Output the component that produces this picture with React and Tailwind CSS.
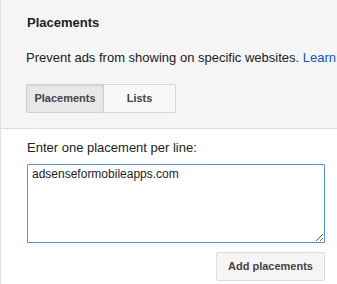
import React from "react";

const App = () => {
  return (
    <div className="w-[337px] h-[284px] overflow-hidden border-l border-[#e0e0e0] bg-white text-[13px] text-[#222]" style={{ fontFamily: '"Liberation Sans", Arial, sans-serif' }}>
      <div className="bg-[#f5f5f5] border-b border-[#dcdcdc] pl-[25px] pt-[15px] h-[129px] whitespace-nowrap">
        <h2 className="font-bold text-[13px] leading-[16px] pl-px">Placements</h2>
        <p className="mt-[19px] leading-[16px]">
          Prevent ads from showing on specific websites. <span className="text-[#15c]">Learn more</span>
        </p>
        <div className="flex mt-[18px] h-[29px] text-[11px] font-bold text-[#444]">
          <div className="w-[78px] flex items-center justify-center bg-[#e8e8e8] border border-[#d0d0d0] rounded-l-[2px] shadow-[inset_0_1px_2px_rgba(0,0,0,0.1)]">Placements</div>
          <div className="w-[72px] flex items-center justify-center bg-[#f8f8f8] border border-l-0 border-[#d6d6d6] rounded-r-[2px]">Lists</div>
        </div>
      </div>
      <div className="pl-[26px] pr-[12px] pt-[11px]">
        <p className="leading-[16px]">Enter one placement per line:</p>
        <textarea
          className="mt-[8px] block w-[298px] h-[79px] border border-[#4d90fe] rounded-[1px] px-[4px] pt-[2px] text-[12px] leading-[15px] text-[#222] outline-none resize-y"
          defaultValue="adsenseformobileapps.com"
          style={{ fontFamily: '"Liberation Sans", Arial, sans-serif' }}
        />
        <div className="flex justify-end w-[298px] mt-[9px]">
          <button className="w-[109px] h-[29px] bg-[#f5f5f5] border border-[#dcdcdc] rounded-[2px] text-[11px] font-bold text-[#444]">Add placements</button>
        </div>
      </div>
    </div>
  );
};

export default App;
